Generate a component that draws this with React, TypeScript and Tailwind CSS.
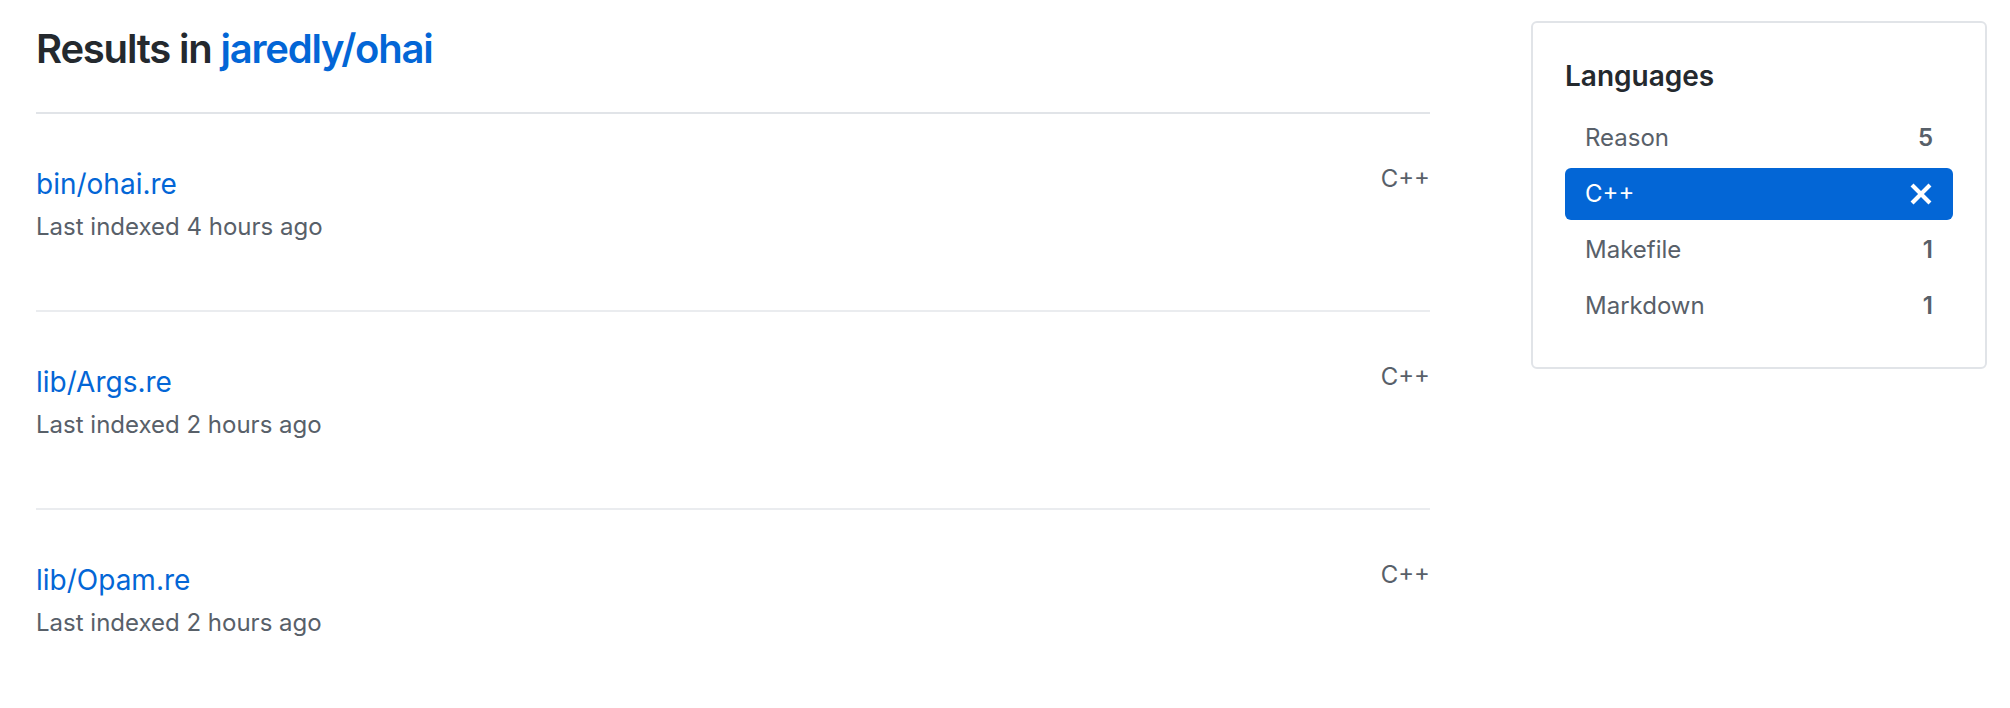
import React from "react";

const results = [
  { path: "bin/ohai.re", time: "Last indexed 4 hours ago" },
  { path: "lib/Args.re", time: "Last indexed 2 hours ago" },
  { path: "lib/Opam.re", time: "Last indexed 2 hours ago" },
];

const langs = [
  { name: "Reason", count: "5", selected: false },
  { name: "C++", count: "", selected: true },
  { name: "Makefile", count: "1", selected: false },
  { name: "Markdown", count: "1", selected: false },
];

function XIcon() {
  return (
    <svg width="24" height="32" viewBox="0 0 12 16" fill="#ffffff" aria-hidden="true">
      <path
        fillRule="evenodd"
        d="M7.48 8l3.75 3.75-1.48 1.48L6 9.48l-3.75 3.75-1.48-1.48L4.52 8 .77 4.25l1.48-1.48L6 6.52l3.75-3.75 1.48 1.48L7.48 8z"
      />
    </svg>
  );
}

export default function App() {
  return (
    <div
      className="w-[2010px] h-[708px] bg-white flex pl-[36px]"
      style={{ fontFamily: "Inter, 'Liberation Sans', sans-serif" }}
    >
      <div className="w-[1394px] shrink-0">
        <h2 className="pt-[24px] pb-[38px] text-[40px] leading-[50px] font-semibold tracking-[-0.03em] text-[#24292e] border-b-2 border-[#e1e4e8]">
          Results in <a className="text-[#0366d6]">jaredly/ohai</a>
        </h2>
        {results.map((r, i) => (
          <div
            key={r.path}
            className={
              "pt-[50px] flex justify-between " +
              (i > 0 ? "h-[198px] border-t-2 border-[#eaecef]" : "h-[196px]")
            }
          >
            <div>
              <a className="block text-[28px] leading-[40px] text-[#0366d6]">{r.path}</a>
              <div className="mt-[5px] text-[24px] leading-[36px] text-[#586069]">{r.time}</div>
            </div>
            <div className="text-[24px] leading-[30px] text-[#586069]">C++</div>
          </div>
        ))}
      </div>
      <div className="ml-[101px] mt-[21px] w-[456px] h-[348px] shrink-0 border-2 border-[#e1e4e8] rounded-[6px] px-[32px] pt-[32px]">
        <h4 className="text-[28px] leading-[42px] font-semibold text-[#24292e] mb-[15px]">Languages</h4>
        <div className="flex flex-col gap-[4px]">
          {langs.map((l) => (
            <div
              key={l.name}
              className={
                "h-[52px] px-[20px] py-[8px] flex items-center justify-between rounded-[6px] text-[24px] leading-[36px] " +
                (l.selected ? "bg-[#0366d6] text-white" : "text-[#586069]")
              }
            >
              <span>{l.name}</span>
              {l.selected ? <XIcon /> : <span className="font-semibold">{l.count}</span>}
            </div>
          ))}
        </div>
      </div>
    </div>
  );
}
